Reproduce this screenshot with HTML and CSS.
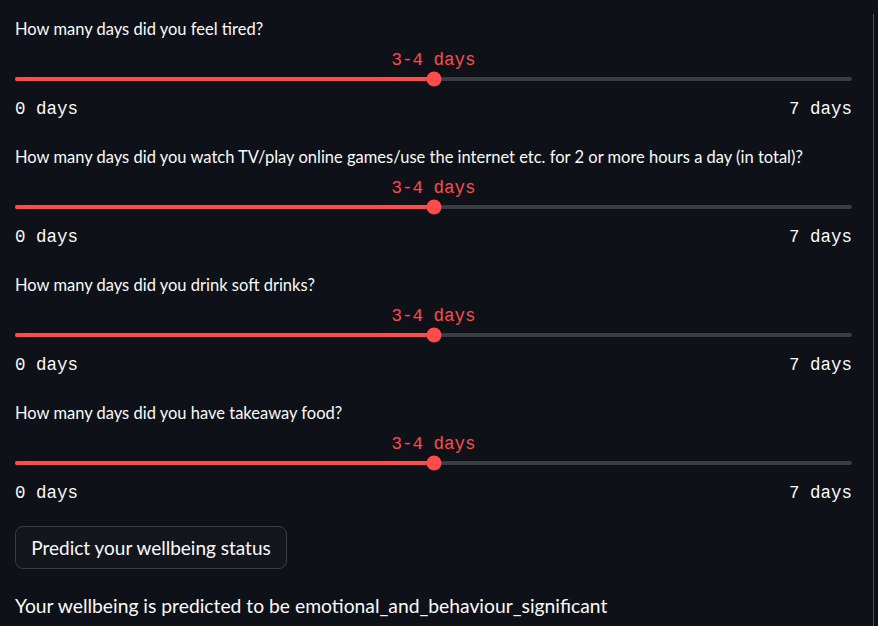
FILE: index.html
```html
<!DOCTYPE html>
<html>
<head>
<meta charset="utf-8">
<link rel="stylesheet" href="styles.css">
</head>
<body>
<div class="app">
  <div class="slider">
    <div class="label">How many days did you feel tired?</div>
    <div class="value"><span style="left:50%">3-4 days</span></div>
    <div class="track"><div class="fill" style="width:50%"></div><div class="thumb" style="left:50%"></div></div>
    <div class="ticks"><span>0 days</span><span>7 days</span></div>
  </div>
  <div class="slider">
    <div class="label">How many days did you watch TV/play online games/use the internet etc. for 2 or more hours a day (in total)?</div>
    <div class="value"><span style="left:50%">3-4 days</span></div>
    <div class="track"><div class="fill" style="width:50%"></div><div class="thumb" style="left:50%"></div></div>
    <div class="ticks"><span>0 days</span><span>7 days</span></div>
  </div>
  <div class="slider">
    <div class="label">How many days did you drink soft drinks?</div>
    <div class="value"><span style="left:50%">3-4 days</span></div>
    <div class="track"><div class="fill" style="width:50%"></div><div class="thumb" style="left:50%"></div></div>
    <div class="ticks"><span>0 days</span><span>7 days</span></div>
  </div>
  <div class="slider">
    <div class="label">How many days did you have takeaway food?</div>
    <div class="value"><span style="left:50%">3-4 days</span></div>
    <div class="track"><div class="fill" style="width:50%"></div><div class="thumb" style="left:50%"></div></div>
    <div class="ticks"><span>0 days</span><span>7 days</span></div>
  </div>
  <button class="btn">Predict your wellbeing status</button>
  <p class="result">Your wellbeing is predicted to be emotional_and_behaviour_significant</p>
</div>
<div class="scrollline"></div>
</body>
</html>
```
FILE: styles.css
```css
html, body {
  margin: 0;
  padding: 0;
  background: #0e1117;
  color: #fafafa;
  height: 100%;
  overflow: hidden;
}
body {
  font-family: "Lato", "Noto Sans", sans-serif;
}
.app {
  width: 837px;
  padding: 19px 0 0 15px;
  display: flex;
  flex-direction: column;
}
.slider {
  display: flex;
  flex-direction: column;
  margin-bottom: 28px;
}
.slider:nth-child(4) {
  margin-bottom: 23px;
}
.label {
  font-size: 16.5px;
  line-height: 20px;
  height: 20px;
  white-space: nowrap;
}
.value {
  position: relative;
  height: 20px;
  margin-top: 11px;
  font-family: "Liberation Mono", monospace;
  font-size: 17.5px;
  line-height: 20px;
  color: #ff4b4b;
}
.value span {
  position: absolute;
  top: 0;
  transform: translateX(-50%);
  white-space: nowrap;
}
.track {
  position: relative;
  height: 4px;
  margin-top: 7px;
  border-radius: 2px;
  background: #3b3d45;
}
.fill {
  height: 100%;
  background: #ff4b4b;
  border-radius: 2px;
}
.thumb {
  position: absolute;
  top: 50%;
  width: 15px;
  height: 15px;
  border-radius: 50%;
  background: #ff4b4b;
  transform: translate(-50%, -50%);
}
.ticks {
  display: flex;
  justify-content: space-between;
  margin-top: 18px;
  font-family: "Liberation Mono", monospace;
  font-size: 17.5px;
  line-height: 20px;
  height: 20px;
}
.btn {
  align-self: flex-start;
  width: 272px;
  height: 43px;
  background: #13161d;
  color: #fafafa;
  border: 1px solid #3a3d44;
  border-radius: 8px;
  font-family: "Lato", "Noto Sans", sans-serif;
  font-size: 19px;
  padding: 0;
  cursor: pointer;
}
.result {
  margin: 25px 0 0;
  font-size: 19.3px;
  line-height: 24px;
  white-space: nowrap;
}
.scrollline {
  position: fixed;
  left: 873px;
  top: 14px;
  bottom: 0;
  width: 1px;
  background: #4b4e55;
}
```
